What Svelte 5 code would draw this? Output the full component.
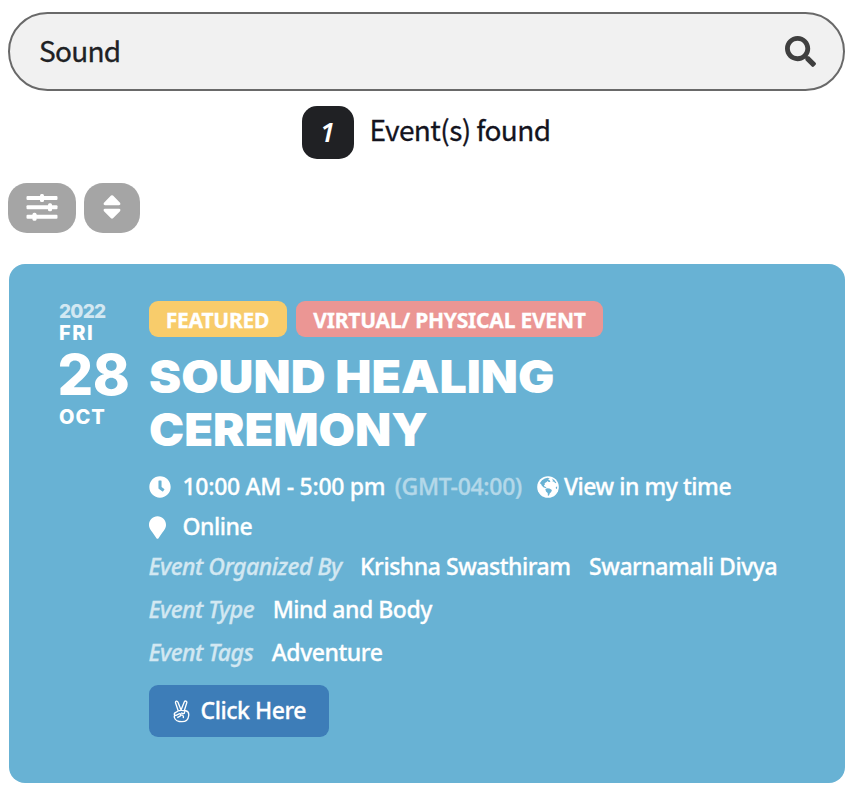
<script>
  const people = ['Krishna Swasthiram', 'Swarnamali Divya'];
  let query = $state('Sound');
</script>

<main>
  <label class="search">
    <input bind:value={query} aria-label="Search events" />
    <svg class="lens" viewBox="0 0 512 512"><path d="M505 442.7L405.3 343c-4.5-4.500-10.600-7-17-7H372c27.600-35.300 44-79.700 44-128C416 93.100 322.900 0 208 0S0 93.100 0 208s93.100 208 208 208c48.300 0 92.700-16.400 128-44v16.300c0 6.400 2.500 12.500 7 17l99.700 99.700c9.400 9.400 24.600 9.400 33.900 0l28.300-28.300c9.400-9.400 9.400-24.600.1-34zM208 336c-70.700 0-128-57.200-128-128 0-70.700 57.200-128 128-128 70.700 0 128 57.200 128 128 0 70.700-57.200 128-128 128z" /></svg>
  </label>

  <div class="count"><i>1</i><span>Event(s) found</span></div>

  <div class="tools">
    <button class="filter" aria-label="Filter">
      <svg viewBox="0 0 32 26">
        <rect x="0.500" y="2" width="31" height="4" rx="1" /><rect x="14" y="0" width="4" height="8" rx="1.500" />
        <rect x="0.500" y="11.300" width="31" height="4" rx="1" /><rect x="22" y="9.300" width="4" height="8" rx="1.500" />
        <rect x="0.500" y="20.800" width="31" height="4" rx="1" /><rect x="6.500" y="18.800" width="4" height="8" rx="1.500" />
      </svg>
    </button>
    <button class="sort" aria-label="Sort">
      <svg viewBox="0 0 18 24"><path d="M8 .6Q9 -.2 10 .6L17 7.800Q18.200 10 16 10.200H2Q-.2 10 1 7.800ZM2 13.800H16Q18.200 14 17 16.200L10 23.300Q9 24.200 8 23.300L1 16.200Q-.2 14 2 13.800Z" /></svg>
    </button>
  </div>

  <article>
    <div class="date">
      <span class="year">2022</span>
      <span class="day">FRI</span>
      <span class="num">28</span>
      <span class="month">OCT</span>
    </div>
    <div class="info">
      <div class="tags"><span class="featured">FEATURED</span><span class="virtual">VIRTUAL/ PHYSICAL EVENT</span></div>
      <h2><span class="t1">SOUND HEALING</span><span class="t2">CEREMONY</span></h2>
      <div class="row time">
        <svg class="ico" viewBox="0 0 512 512"><path d="M256 8C119 8 8 119 8 256s111 248 248 248 248-111 248-248S393 8 256 8zm57.100 350.100L224.900 294c-3.100-2.300-4.900-5.900-4.900-9.700V116c0-6.600 5.400-12 12-12h48c6.600 0 12 5.400 12 12v137.700l63.500 46.200c5.400 3.900 6.500 11.400 2.600 16.800l-28.200 38.800c-3.900 5.300-11.400 6.500-16.800 2.600z" /></svg>
        <span class="hours">10:00 AM - 5:00 pm</span>
        <span class="zone">(GMT-04:00)</span>
        <svg class="globe" viewBox="0 0 22 22">
          <circle cx="11" cy="11" r="10.800" />
          <path class="land" d="M2.800 7.200 5 4.300 7.800 2.400 10.800 1.700 12.800 2.800 11 3.600 12.900 4.600 13.300 6 11.600 6.100 10.700 5 9.600 5.900 7.600 7.300 8 8.400 6.900 9.300 7.500 10.500 9.500 11.200 8.900 12 6.700 11.400 4.900 9.800 4 8ZM8.300 13 10.100 12.200 12.500 12.600 14.900 14.100 14.200 15.900 12.800 17.200 12 19.600 10.900 19.700 10.700 17 9 15.400ZM14.800 2.500 17.300 4.100 19.300 6.800 18.400 7.300 17 5.700 15.300 5.200 16 4.200ZM18.800 11 20.200 10.500 20 13 18.900 12.500Z" />
        </svg>
        <span class="view">View in my time</span>
      </div>
      <div class="row place">
        <svg class="pin" viewBox="0 0 384 512"><path d="M172.300 501.700C27 291 0 269.400 0 192 0 86 86 0 192 0s192 86 192 192c0 77.400-27 99-172.300 309.700-9.500 13.800-29.900 13.800-39.500 0z" /></svg>
        <span>Online</span>
      </div>
      <div class="row people"><em>Event Organized By</em>{#each people as person}<span>{person}</span>{/each}</div>
      <div class="row meta"><em>Event Type</em><span>Mind and Body</span></div>
      <div class="row meta"><em>Event Tags</em><span>Adventure</span></div>
      <button class="cta">
        <svg viewBox="0 0 18 24"><path d="M5.600 11.500 2.800 3.200C2 .9 4.500.2 5.300 2.300L8.500 10.500 11.900 2C12.800 0 15.200.9 14.500 3L12 11M5.600 11.500 2.500 13.200C.6 14.200 1.300 16.600 3.200 16L6.500 14.500C8.500 13.800 8.800 16.400 7 17.200L4.500 18.500M5.600 11.500C7 10.300 9.500 10.500 13.500 11.200 16.500 11.700 17 13.500 16.600 16.500 16.200 20.500 13.500 22.800 9.500 22.800 5.500 22.800 2 21 1.500 18.500 1 16.500 1.800 16 3.200 16M8.500 13.500 11.500 14.500M8.500 15.500C10.500 15.500 11.500 17 10.800 19M12.500 11.500 11.800 14.500" /></svg>
        <span>Click Here</span>
      </button>
    </div>
  </article>
</main>

<style>
  :global(body) { background: #fff; }
  main { box-sizing: border-box; width: 854px; height: 792px; padding: 12px 9px 9px; overflow: hidden; font-family: "Noto Sans", sans-serif; display: flex; flex-direction: column; }
  button { border: 0; padding: 0; font: inherit; color: inherit; letter-spacing: inherit; }
  span, em { white-space: nowrap; }
  svg { flex: none; display: block; fill: currentColor; }
  .search { box-sizing: border-box; height: 79px; margin: 0 0 0 -1px; border: 2px solid #696969; border-radius: 40px; background: #f1f1f1; display: flex; align-items: center; padding: 0 27px 0 29px; }
  input { flex: 1; min-width: 0; border: 0; outline: 0; padding: 0 0 4px; background: none; color: #202124; font: 28px/40px "Noto Sans CJK JP", sans-serif; letter-spacing: -.75px; -webkit-text-stroke: .3px; }
  .lens { width: 31px; height: 31px; color: #3f3f3f; }
  .count { height: 53px; margin: 15px 0 0 292.500px; display: flex; align-items: center; gap: 16px; font: 28px/40px "Noto Sans CJK JP", sans-serif; color: #14141e; }
  .count span { padding-bottom: 8px; letter-spacing: -.6px; -webkit-text-stroke: .3px; }
  .count i { width: 52px; height: 53px; border-radius: 15px; background: #202124; color: #fff; font: italic 600 27px/51px "Noto Sans", sans-serif; text-align: center; }
  .tools { display: flex; gap: 7.500px; margin: 24px 0 0 -1px; height: 50px; color: #fff; }
  .tools button { background: #a5a5a5; border-radius: 19px; display: flex; justify-content: center; padding-top: 11px; }
  .filter { width: 68px; }
  .filter svg { width: 32px; height: 26px; overflow: visible; }
  .sort { width: 56px; }
  .sort svg { width: 18px; height: 24px; margin-top: 1px; }
  article { box-sizing: border-box; height: 519px; margin-top: 31px; width: 836px; background: #68b2d4; border-radius: 16px; color: #fff; padding: 37px 0 0 50px; display: flex; }
  .date { width: 89.500px; flex: none; padding-top: 1px; display: flex; flex-direction: column; align-items: flex-start; font-family: Inter, sans-serif; font-weight: 800; font-size: 19px; }
  .year { line-height: 20px; opacity: .7; letter-spacing: -.8px; }
  .day { line-height: 22px; font-size: 20px; letter-spacing: 1.500px; }
  .num { line-height: 62px; font-size: 56px; letter-spacing: -.5px; margin-left: -1.500px; }
  .month { line-height: 22px; font-size: 20px; letter-spacing: 1px; }
  .info { flex: 1; min-width: 0; font-size: 23px; font-weight: 500; letter-spacing: -.46px; }
  .tags { display: flex; gap: 9.500px; height: 36px; line-height: 38px; font-size: 21px; font-weight: 700; text-align: center; letter-spacing: -.22px; }
  .tags span { border-radius: 9px; -webkit-text-stroke: .3px; }
  .featured { width: 138px; background: #f8cc6b; }
  .virtual { width: 307px; background: #eb9694; }
  h2 { margin: 13px 0 0; display: flex; flex-direction: column; align-items: flex-start; font: 900 46px/53px Inter, sans-serif; letter-spacing: 0; }
  h2 span { transform-origin: 0 50%; }
  .t1 { transform: scaleX(1.05); }
  .t2 { transform: scaleX(1.024); }
  .row { display: flex; align-items: center; height: 40px; }
  .row span, .row em { padding-bottom: 2px; -webkit-text-stroke: .3px; }
  .time { margin-top: 11px; }
  .ico { width: 22px; height: 22px; margin-right: 12px; }
  .hours { letter-spacing: -.3px; }
  .zone { opacity: .5; margin-left: 9.500px; letter-spacing: -.3px; }
  .globe { width: 22px; height: 22px; margin: 0 5px 0 15px; }
  .land { fill: #68b2d4; }
  .pin { width: 17px; height: 23px; margin-right: 17px; }
  .row em { opacity: .7; margin-right: 18.500px; }
  .people { gap: 18.500px; }
  .row.people em { margin-right: 0; }
  .meta { height: 43px; padding-top: 2px; box-sizing: border-box; }
  .cta { width: 180.500px; height: 52px; margin-top: 12px; background: #3d7db8; border-radius: 9px; display: flex; align-items: center; padding-left: 24px; gap: 11px; }
  .cta svg { width: 17px; height: 23px; fill: none; stroke: #fff; stroke-width: 1.400; stroke-linejoin: round; }
  .cta span { padding-bottom: 2px; -webkit-text-stroke: .3px; }
</style>
